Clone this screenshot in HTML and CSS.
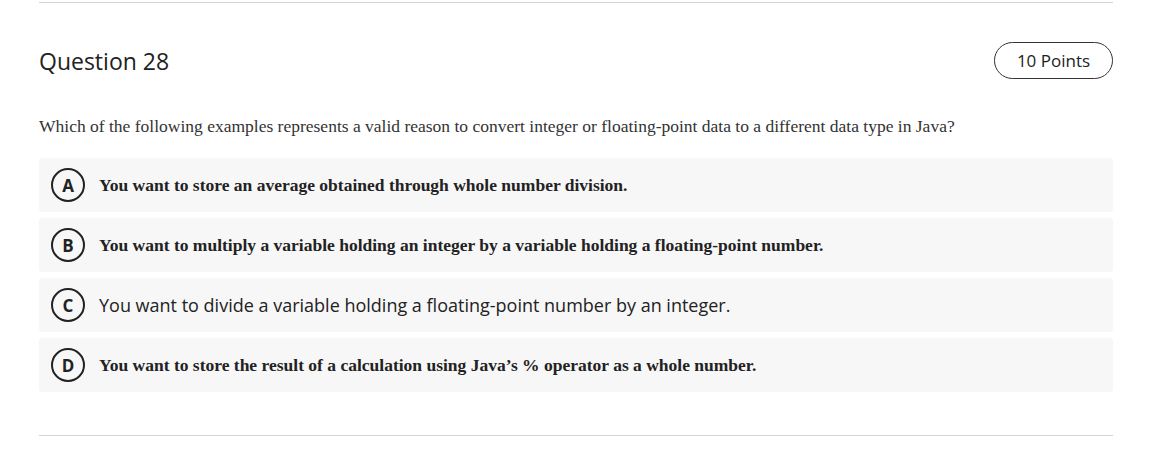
FILE: index.html
```html
<!DOCTYPE html>
<html>
<head>
<meta charset="utf-8">
<link rel="stylesheet" href="styles.css">
</head>
<body>
<div class="page">
  <div class="rule"></div>
  <div class="header">
    <h2 class="title">Question 28</h2>
    <span class="points">10 Points</span>
  </div>
  <p class="prompt">Which of the following examples represents a valid reason to convert integer or floating-point data to a different data type in Java?</p>
  <div class="options">
    <div class="option"><span class="letter">A</span><span class="text serif">You want to store an average obtained through whole number division.</span></div>
    <div class="option"><span class="letter">B</span><span class="text serif">You want to multiply a variable holding an integer by a variable holding a floating-point number.</span></div>
    <div class="option"><span class="letter">C</span><span class="text sans">You want to divide a variable holding a floating-point number by an integer.</span></div>
    <div class="option"><span class="letter">D</span><span class="text serif">You want to store the result of a calculation using Java’s % operator as a whole number.</span></div>
  </div>
  <div class="rule bottom"></div>
</div>
</body>
</html>
```
FILE: styles.css
```css
html, body { margin: 0; padding: 0; background: #fff; }
body { font-family: "Open Sans", sans-serif; color: #222; }
.page { margin: 0 37px 0 39px; padding-top: 2px; }
.rule { height: 1px; background: #d4d4d4; }
.rule.bottom { margin-top: 43px; }
.header {
  display: flex; justify-content: space-between; align-items: center;
  margin-top: 39px; height: 37px;
}
.title { margin: 0; font-size: 23px; font-weight: 400; line-height: 30px; color: #222; }
.points {
  box-sizing: border-box; height: 37px; width: 119px;
  border: 1px solid #333; border-radius: 19px;
  display: flex; align-items: center; justify-content: center;
  font-size: 17px; color: #222;
}
.prompt {
  margin: 35px 0 0 0; font-family: "Liberation Serif", serif; font-size: 17.5px;
  line-height: 24px; color: #333;
}
.options { margin-top: 20px; display: flex; flex-direction: column; gap: 6px; }
.option {
  height: 54px; background: #f7f7f7; border-radius: 3px;
  display: flex; align-items: center; padding-left: 12px; gap: 14px;
}
.letter {
  box-sizing: border-box; width: 34px; height: 34px; border: 2px solid #222;
  border-radius: 50%; display: flex; align-items: center; justify-content: center;
  font-weight: 700; font-size: 17px; color: #222; flex: none;
}
.text { color: #222; }
.serif { font-family: "Liberation Serif", serif; font-weight: 700; font-size: 17.5px; }
.sans { font-family: "Open Sans", sans-serif; font-size: 18px; }
```
